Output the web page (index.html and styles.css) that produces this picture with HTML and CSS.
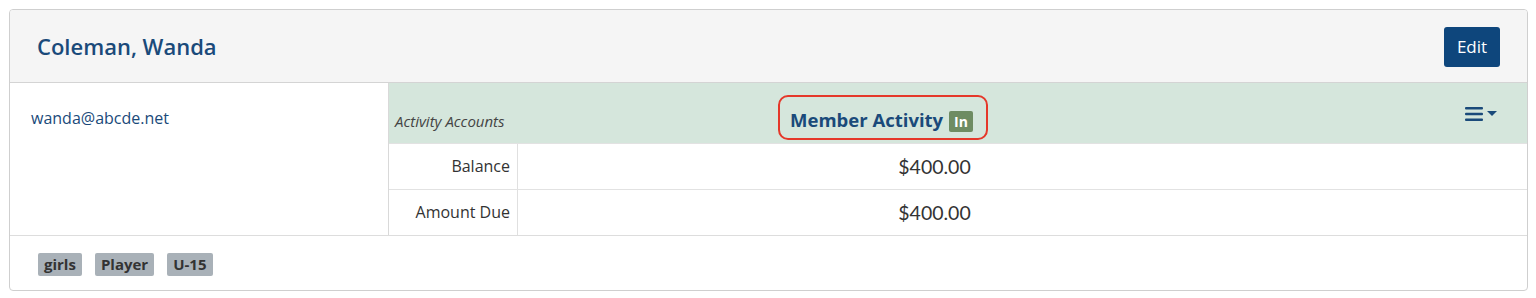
FILE: index.html
```html
<!doctype html>
<html lang="en">
<head>
    <meta charset="utf-8" />
    <meta name="viewport" content="width=device-width, initial-scale=1.0">
    <title>Member</title>
    <link rel="stylesheet" href="styles.css">
</head>
<body>

    <div class="member-card">
        <div class="card-header">
            <h1 class="member-name">Coleman, Wanda</h1>
            <button class="edit-button">Edit</button>
        </div>

        <div class="card-body">
            <div class="contact-col">
                <a class="email-link" href="#">wanda@abcde.net</a>
            </div>

            <div class="accounts">
                <div class="accounts-head">
                    <div class="head-label">Activity Accounts</div>
                    <div class="head-title">
                        <span class="title-ring">
                            <span class="title-text">Member Activity</span>
                            <span class="in-badge">In</span>
                        </span>
                    </div>
                    <div class="head-menu">
                        <!-- メニューアイコン -->
                        <svg width="34" height="16" viewBox="0 0 34 16">
                            <rect x="0" y="1" width="18" height="2.6" rx="1" fill="#1a4a7a"/>
                            <rect x="0" y="6.7" width="18" height="2.6" rx="1" fill="#1a4a7a"/>
                            <rect x="0" y="12.4" width="18" height="2.6" rx="1" fill="#1a4a7a"/>
                            <polygon points="22,5 32,5 27,10" fill="#1a4a7a"/>
                        </svg>
                    </div>
                </div>
                <div class="account-row">
                    <div class="row-label">Balance</div>
                    <div class="row-value">$400.00</div>
                </div>
                <div class="account-row">
                    <div class="row-label">Amount Due</div>
                    <div class="row-value">$400.00</div>
                </div>
            </div>
        </div>

        <div class="card-footer">
            <span class="tag">girls</span>
            <span class="tag">Player</span>
            <span class="tag">U-15</span>
        </div>
    </div>

</body>
</html>
```

FILE: styles.css
```css
body {
    margin: 0;
    padding: 9px 8px 0 9px;
    background-color: #ffffff;
    font-family: "Open Sans", "Liberation Sans", sans-serif;
    color: #333333;
}

.member-card {
    border: 1px solid #cfcfcf;
    border-radius: 4px;
    width: 1517px;
    overflow: hidden;
}

.card-header {
    display: flex;
    align-items: center;
    justify-content: space-between;
    height: 72px;
    padding: 0 27px 0 27px;
    background-color: #f5f5f5;
    border-bottom: 1px solid #d4d4d4;
}

.member-name {
    margin: 0;
    font-size: 22px;
    font-weight: 600;
    color: #1a4a7a;
}

.edit-button {
    width: 56px;
    height: 40px;
    font-family: "Open Sans", "Liberation Sans", sans-serif;
    font-size: 17px;
    background-color: #0e467c;
    color: white;
    border: none;
    border-radius: 3px;
    cursor: pointer;
    margin-top: 1px;
}

.card-body {
    display: flex;
    border-bottom: 1px solid #dddddd;
}

.contact-col {
    width: 357px;
    padding: 24px 0 0 21px;
    border-right: 1px solid #d9d9d9;
}

.email-link {
    font-size: 16px;
    color: #1a4a7a;
    text-decoration: none;
}

.accounts {
    flex: 1;
}

.accounts-head {
    display: flex;
    align-items: flex-end;
    height: 60px;
    background-color: #d5e6dc;
}

.head-label {
    width: 122px;
    padding: 0 0 12px 6px;
    font-size: 15px;
    font-style: italic;
    color: #444444;
}

.head-title {
    flex: 1;
    text-align: center;
    padding: 0 216px 3px 0;
}

.title-ring {
    display: inline-flex;
    align-items: center;
    gap: 6px;
    height: 45px;
    padding: 4px 13px 0 10px;
    border: 2px solid #e5382a;
    border-radius: 10px;
    box-sizing: border-box;
}

.title-text {
    font-size: 18.5px;
    font-weight: 700;
    color: #1a4a7a;
}

.in-badge {
    display: inline-block;
    padding: 0 5px;
    line-height: 21px;
    font-size: 14px;
    font-weight: 700;
    color: #ffffff;
    background-color: #6e8c62;
    border-radius: 2px;
    margin-top: 3px;
}

.head-menu {
    width: 62px;
    align-self: center;
    padding-top: 5px;
}

.account-row {
    display: flex;
    height: 45px;
    border-top: 1px solid #e2e2e2;
}

.account-row:first-of-type {
    border-top: none;
}

.row-label {
    width: 121px;
    padding-right: 7px;
    border-right: 1px solid #e0e0e0;
    text-align: right;
    line-height: 45px;
    font-size: 16px;
    color: #333333;
}

.row-value {
    flex: 1;
    text-align: center;
    padding-right: 176px;
    line-height: 45px;
    font-family: "Lato", "Liberation Sans", sans-serif;
    font-size: 19.5px;
    color: #333333;
}

.card-footer {
    display: flex;
    align-items: center;
    gap: 13px;
    height: 54px;
    padding-left: 28px;
}

.tag {
    display: inline-block;
    padding: 0 6px;
    line-height: 23px;
    font-size: 15px;
    font-weight: 700;
    color: #333333;
    background-color: #a9b1b8;
    border-radius: 2px;
    margin-top: 3px;
}
```
